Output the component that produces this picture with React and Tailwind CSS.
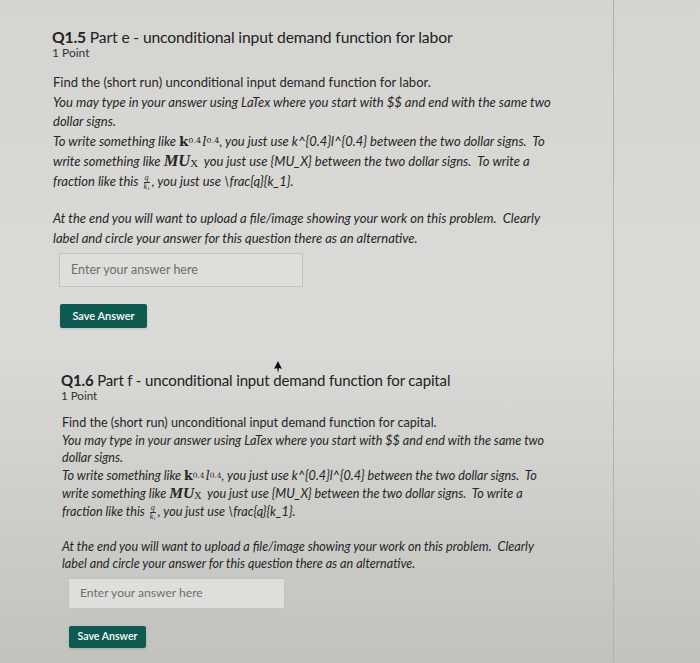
import React from "react";

// math bits rendered like KaTeX output
function KL({ size }) {
  return (
    <span className="font-['DejaVu_Serif',serif] not-italic" style={{ fontSize: size }}>
      <span className="font-bold">k</span>
      <sup className="text-[0.6em] relative -top-[0.25em]">0.4</sup>
      <span className="italic ml-[1px]">l</span>
      <sup className="text-[0.6em] relative -top-[0.25em]">0.4</sup>
    </span>
  );
}

function MUX({ size }) {
  return (
    <span className="font-['Liberation_Serif',serif] italic font-bold" style={{ fontSize: size }}>
      MU<sub className="text-[0.65em] not-italic font-normal relative top-[0.05em]">X</sub>
    </span>
  );
}

function Frac() {
  return (
    <span className="inline-flex flex-col items-center align-middle font-['Liberation_Serif',serif] italic text-[8px] leading-[8px] mx-[2px]">
      <span className="border-b border-[#333] px-[1px]">q</span>
      <span>
        k<sub className="text-[5px]">1</sub>
      </span>
    </span>
  );
}

function Question({ num, part, topic, pl, titleSize, titleLead, pointLead, textSize, lead, findGap, atGap, inputW, inputH, btnW, btnH, btnGap, mathSize }) {
  return (
    <section style={{ paddingLeft: pl }}>
      <h2 className="text-[#222] tracking-[-0.01em] whitespace-nowrap" style={{ fontSize: titleSize, lineHeight: titleLead }}>
        <span className="font-bold">{num}</span> Part {part} - unconditional input demand function for {topic}
      </h2>
      <div className="text-[#333]" style={{ fontSize: textSize - 1, lineHeight: pointLead }}>
        1 Point
      </div>
      <div className="text-[#262626] pl-[1px]" style={{ fontSize: textSize, lineHeight: lead, marginTop: findGap }}>
        <div className="whitespace-nowrap">Find the (short run) unconditional input demand function for {topic}.</div>
        <div className="italic">
          <div className="whitespace-nowrap">
            You may type in your answer using LaTex where you start with $$ and end with the same two
          </div>
          <div className="whitespace-nowrap">dollar signs.</div>
          <div className="whitespace-nowrap">
            To write something like <KL size={mathSize} />, you just use k^{"{0.4}"}l^{"{0.4}"} between the two dollar signs.&nbsp; To
          </div>
          <div className="whitespace-nowrap">
            write something like <MUX size={mathSize + 3} />&nbsp; you just use {"{MU_X}"} between the two dollar signs.&nbsp; To write a
          </div>
          <div className="whitespace-nowrap">
            fraction like this <Frac />, you just use \frac{"{q}{k_1}"}.
          </div>
        </div>
        <div className="italic" style={{ marginTop: atGap }}>
          <div className="whitespace-nowrap">
            At the end you will want to upload a file/image showing your work on this problem.&nbsp; Clearly
          </div>
          <div className="whitespace-nowrap">label and circle your answer for this question there as an alternative.</div>
        </div>
      </div>
      <div
        className="mt-[5px] ml-[7px] border border-[#c2c2bf] bg-[#dededb] flex items-center pl-[11px] text-[#6e6e6c]"
        style={{ width: inputW, height: inputH, fontSize: textSize - 0.5 }}
      >
        Enter your answer here
      </div>
      <button
        type="button"
        className="ml-[8px] bg-[#0d5b50] text-white font-semibold rounded-[2px] flex items-center justify-center shadow-sm"
        style={{ width: btnW, height: btnH, marginTop: btnGap, fontSize: textSize - 2 }}
      >
        Save Answer
      </button>
    </section>
  );
}

export default function App() {
  return (
    <div className="relative w-[700px] h-[663px] overflow-hidden bg-gradient-to-b from-[#d4d4d1] via-[#dadad7] to-[#c2c2bd] font-['Lato','Open_Sans',sans-serif]">
      <div className="w-[614px] h-full border-r border-[#b3b3af] pt-[28px]">
        <Question
          num="Q1.5"
          part="e"
          topic="labor"
          pl={52}
          titleSize={15.7}
          titleLead="18px"
          pointLead="14px"
          textSize={13}
          lead="19.5px"
          findGap={13}
          atGap={18}
          inputW={244}
          inputH={34}
          btnW={87}
          btnH={24}
          btnGap={17}
          mathSize={13.5}
        />
        <div className="mt-[44px]">
          <Question
            num="Q1.6"
            part="f"
            topic="capital"
            pl={61}
            titleSize={15}
            titleLead="17px"
            pointLead="13px"
            textSize={12.6}
            lead="17.5px"
            findGap={12}
            atGap={17}
            inputW={217}
            inputH={31}
            btnW={77}
            btnH={22}
            btnGap={17}
            mathSize={12.5}
          />
        </div>
      </div>
      {/* mouse cursor */}
      <svg className="absolute left-[272px] top-[360px]" width="12" height="14" viewBox="0 0 12 14">
        <path d="M6 1 L10 9 L7 8 L6 13 L5 8 L2 9 Z" fill="#111" />
      </svg>
    </div>
  );
}
